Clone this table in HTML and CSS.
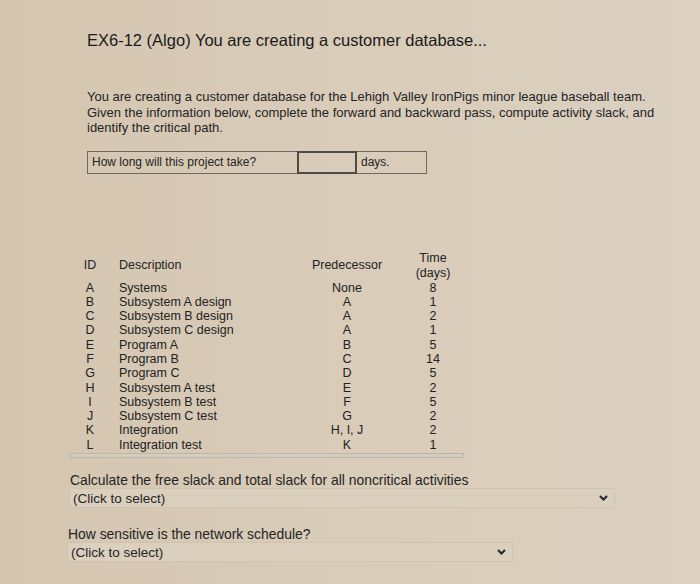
FILE: index.html
```html
<!DOCTYPE html>
<html>
<head>
<meta charset="utf-8">
<link rel="stylesheet" href="styles.css">
</head>
<body>
<div class="page">
  <h1 class="title">EX6-12 (Algo) You are creating a customer database...</h1>
  <p class="intro">You are creating a customer database for the Lehigh Valley IronPigs minor league baseball team. Given the information below, complete the forward and backward pass, compute activity slack, and identify the critical path.</p>
  <div class="ask">
    <div class="ask-q">How long will this project take?</div>
    <div class="ask-input"></div>
    <div class="ask-unit">days.</div>
  </div>

  <div class="table">
    <div class="th c">ID</div><div class="th d">Description</div><div class="th c">Predecessor</div><div class="th c">Time<br>(days)</div>
    <div class="c">A</div><div class="d">Systems</div><div class="c">None</div><div class="c">8</div>
    <div class="c">B</div><div class="d">Subsystem A design</div><div class="c">A</div><div class="c">1</div>
    <div class="c">C</div><div class="d">Subsystem B design</div><div class="c">A</div><div class="c">2</div>
    <div class="c">D</div><div class="d">Subsystem C design</div><div class="c">A</div><div class="c">1</div>
    <div class="c">E</div><div class="d">Program A</div><div class="c">B</div><div class="c">5</div>
    <div class="c">F</div><div class="d">Program B</div><div class="c">C</div><div class="c">14</div>
    <div class="c">G</div><div class="d">Program C</div><div class="c">D</div><div class="c">5</div>
    <div class="c">H</div><div class="d">Subsystem A test</div><div class="c">E</div><div class="c">2</div>
    <div class="c">I</div><div class="d">Subsystem B test</div><div class="c">F</div><div class="c">5</div>
    <div class="c">J</div><div class="d">Subsystem C test</div><div class="c">G</div><div class="c">2</div>
    <div class="c">K</div><div class="d">Integration</div><div class="c">H, I, J</div><div class="c">2</div>
    <div class="c">L</div><div class="d">Integration test</div><div class="c">K</div><div class="c">1</div>
  </div>
  <div class="bar"></div>

  <div class="q q1">
    <div class="q-label">Calculate the free slack and total slack for all noncritical activities</div>
    <div class="select wide"><span>(Click to select)</span>
      <svg class="chev" width="9" height="6" viewBox="0 0 9 6"><polyline points="1,1 4.5,4.5 8,1" fill="none" stroke="#2a2a2a" stroke-width="2.2"/></svg>
    </div>
  </div>
  <div class="q q2">
    <div class="q-label">How sensitive is the network schedule?</div>
    <div class="select narrow"><span>(Click to select)</span>
      <svg class="chev" width="9" height="6" viewBox="0 0 9 6"><polyline points="1,1 4.5,4.5 8,1" fill="none" stroke="#2a2a2a" stroke-width="2.2"/></svg>
    </div>
  </div>
</div>
</body>
</html>
```

FILE: styles.css
```css
html, body {
  margin: 0;
  padding: 0;
}
body {
  width: 700px;
  height: 584px;
  overflow: hidden;
  background: linear-gradient(90deg, #d4c6b1 0%, #d9ccb8 50%, #dbd0c1 100%);
  font-family: "Liberation Sans", Arial, sans-serif;
  color: #242424;
}
.page {
  padding: 30px 0 0 87px;
  display: flex;
  flex-direction: column;
}
.title {
  margin: 0;
  font-size: 16.5px;
  font-weight: normal;
  line-height: 20px;
  color: #1a1a1a;
}
.intro {
  margin: 39px 0 0 0;
  width: 590px;
  font-size: 13px;
  line-height: 15.5px;
  color: #242424;
}
.ask {
  margin-top: 15px;
  display: flex;
  width: 340px;
  height: 23px;
  border: 1px solid #6e6a63;
  font-size: 12px;
  box-sizing: border-box;
}
.ask-q {
  width: 205px;
  padding-left: 4px;
  line-height: 21px;
}
.ask-input {
  width: 60px;
  border: 2px solid #4e4b46;
  margin: -1px 0;
  box-sizing: border-box;
}
.ask-unit {
  padding-left: 4px;
  line-height: 21px;
}
.table {
  margin: 78px 0 0 -9px;
  display: grid;
  grid-template-columns: 24px 205px 80px 92px;
  font-size: 12.5px;
  line-height: 14.3px;
  color: #222;
}
.table .th {
  display: flex;
  align-items: center;
  justify-content: center;
  height: 28px;
  margin-bottom: 1px;
  text-align: center;
}
.table .th.d {
  justify-content: flex-start;
}
.c {
  text-align: center;
}
.d {
  padding-left: 17px;
}
.bar {
  margin: 1px 0 0 -17px;
  width: 392px;
  height: 3px;
  border: 1px solid #bdb5a8;
  background: #d5cdc0;
}
.q {
  display: flex;
  flex-direction: column;
  font-size: 14px;
}
.q1 {
  margin: 15px 0 0 -18px;
}
.q2 {
  margin: 19px 0 0 -20px;
}
.q-label {
  line-height: 15px;
  padding-left: 1px;
  font-size: 13.9px;
}
.select {
  display: flex;
  align-items: center;
  justify-content: space-between;
  height: 20px;
  box-sizing: border-box;
  border: 1px solid #cfc4b2;
  background: #dbd0be;
  padding: 0 6px 0 3px;
  font-size: 13.5px;
}
.select.wide { width: 546px; }
.select.narrow { width: 446px; }
.chev { display: block; }
```
